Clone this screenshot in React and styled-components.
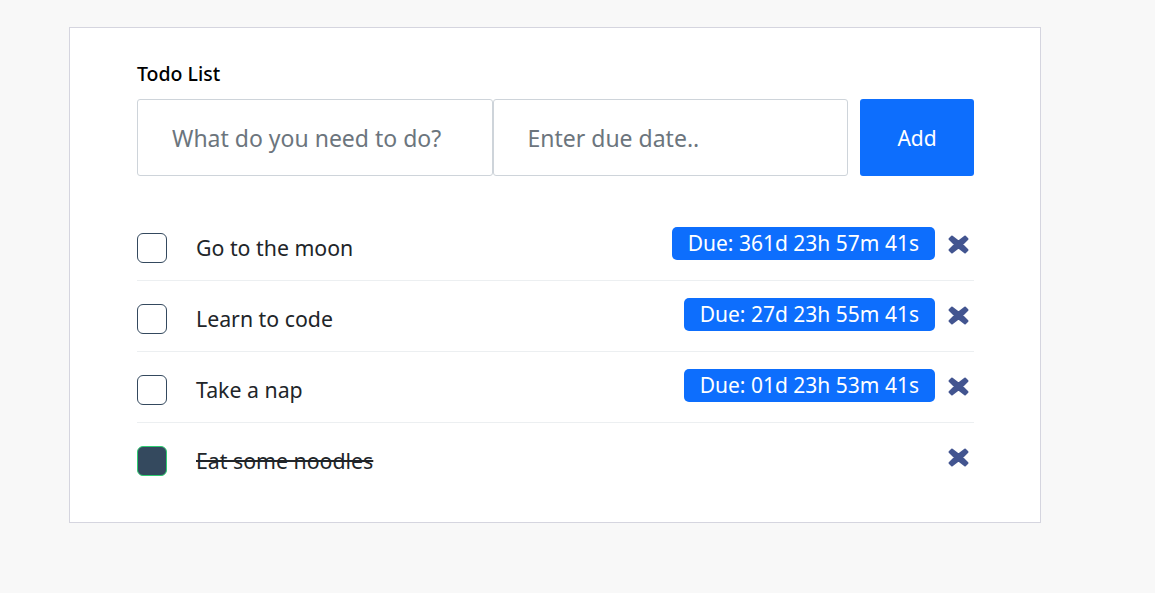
import React, { useState } from 'react';
import styled, { createGlobalStyle, css } from 'styled-components';

const GlobalStyle = createGlobalStyle`
  * {
    box-sizing: border-box;
  }

  body {
    margin: 0;
    background: #f8f8f8;
    font-family: 'Noto Sans', 'Open Sans', sans-serif;
    color: #212529;
  }
`;

const Page = styled.div`
  padding: 27px 0 0 69px;
  min-height: 593px;
`;

const Card = styled.div`
  width: 972px;
  background: #fff;
  border: 1px solid #d5d5df;
  padding: 33px 66px 28px 67px;
`;

const Title = styled.h1`
  margin: 0 0 12px;
  font-size: 19.5px;
  font-weight: 500;
  line-height: 26px;
  color: #000;
`;

const Form = styled.form`
  display: flex;
  align-items: stretch;
  height: 77px;
  margin-bottom: 34px;
`;

const InputGroup = styled.div`
  display: flex;
  flex: 1;
  min-width: 0;
`;

const Input = styled.input`
  flex: 1;
  min-width: 0;
  height: 100%;
  padding: 0 34px;
  font-family: inherit;
  font-size: 23px;
  color: #212529;
  background: #fff;
  border: 1px solid #ced4da;
  border-radius: 3px;
  outline: none;

  &::placeholder {
    color: #6c757d;
  }
`;

const AddButton = styled.button`
  flex: none;
  width: 114px;
  margin-left: 12px;
  font-family: inherit;
  font-size: 21px;
  color: #fff;
  background: #0d6efd;
  border: none;
  border-radius: 3px;
  cursor: pointer;
`;

const List = styled.ul`
  list-style: none;
  margin: 0;
  padding: 0;
`;

const Row = styled.li`
  display: flex;
  align-items: flex-start;
  height: 71px;
  padding-top: 17px;
  border-bottom: 1px solid #eceff1;

  &:last-child {
    border-bottom: none;
  }
`;

const Check = styled.span`
  flex: none;
  width: 30px;
  height: 30px;
  margin-top: 6px;
  border-radius: 6px;
  border: 1px solid #34495e;
  background: #fff;
  cursor: pointer;

  ${({ checked }) =>
    checked &&
    css`
      background: #34495e;
      border-color: #2ecc71;
    `}
`;

const Label = styled.span`
  flex: 1;
  margin-left: 29px;
  margin-top: 7px;
  font-size: 21.3px;
  line-height: 28px;
  color: #212529;
  text-decoration: ${({ done }) => (done ? 'line-through' : 'none')};
`;

const Badge = styled.span`
  height: 33px;
  padding: 0 16px;
  font-size: 21px;
  line-height: 33px;
  color: #fff;
  background: #0d6efd;
  border-radius: 5px;
  white-space: nowrap;
`;

const RemoveButton = styled.button`
  display: flex;
  align-items: center;
  justify-content: center;
  width: 41px;
  height: 34px;
  padding: 0 0 0 6px;
  margin-right: -2px;
  background: none;
  border: none;
  cursor: pointer;
`;

const CrossIcon = () => (
  <svg width="21" height="19" viewBox="0 0 21 19">
    <path
      d="M4 1.5 L10.5 6.5 L17 1.5 L19.5 4 L14 9.5 L19.5 15 L17 17.5 L10.5 12.5 L4 17.5 L1.5 15 L7 9.5 L1.5 4 Z"
      fill="#435590"
      stroke="#435590"
      strokeWidth="2"
      strokeLinejoin="round"
    />
  </svg>
);

const initialTodos = [
  { id: 1, text: 'Go to the moon', due: 'Due: 361d 23h 57m 41s', done: false },
  { id: 2, text: 'Learn to code', due: 'Due: 27d 23h 55m 41s', done: false },
  { id: 3, text: 'Take a nap', due: 'Due: 01d 23h 53m 41s', done: false },
  { id: 4, text: 'Eat some noodles', due: null, done: true },
];

const App = () => {
  const [todos, setTodos] = useState(initialTodos);

  const toggle = id =>
    setTodos(todos.map(t => (t.id === id ? { ...t, done: !t.done } : t)));

  const remove = id => setTodos(todos.filter(t => t.id !== id));

  return (
    <Page>
      <GlobalStyle />
      <Card>
        <Title>Todo List</Title>
        <Form onSubmit={e => e.preventDefault()}>
          <InputGroup>
            <Input type="text" placeholder="What do you need to do?" />
            <Input type="text" placeholder="Enter due date.." />
          </InputGroup>
          <AddButton type="submit">Add</AddButton>
        </Form>
        <List>
          {todos.map(({ id, text, due, done }) => (
            <Row key={id}>
              <Check checked={done} onClick={() => toggle(id)} />
              <Label done={done}>{text}</Label>
              {due && <Badge>{due}</Badge>}
              <RemoveButton type="button" onClick={() => remove(id)}>
                <CrossIcon />
              </RemoveButton>
            </Row>
          ))}
        </List>
      </Card>
    </Page>
  );
};

export default App;
